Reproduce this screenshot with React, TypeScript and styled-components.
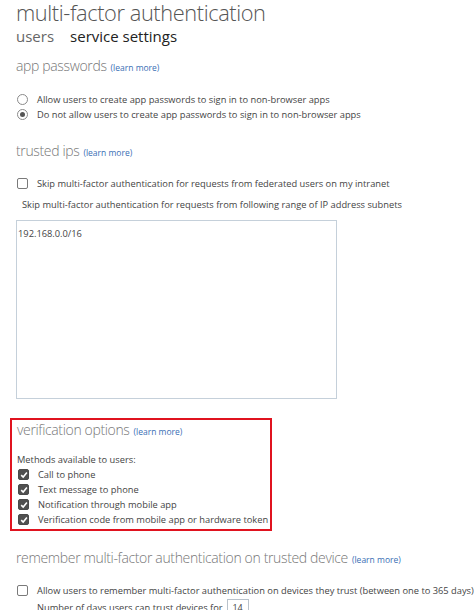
import styled, { createGlobalStyle } from "styled-components";

const GlobalStyle = createGlobalStyle`
  html, body {
    margin: 0;
    padding: 0;
    background: #ffffff;
  }
  body {
    font-family: "Open Sans", "Noto Sans", "Liberation Sans", sans-serif;
    color: #444;
    overflow: hidden;
  }
`;

const Page = styled.div`
  width: 474px;
  height: 610px;
  overflow: hidden;
  padding: 0 0 0 16px;
  box-sizing: border-box;
`;

const Title = styled.h1`
  margin: 0;
  font-size: 21.8px;
  font-weight: 300;
  line-height: 25px;
  color: #555;
  letter-spacing: -0.4px;
`;

const Tabs = styled.nav`
  display: flex;
  gap: 16px;
  margin-top: 0;
  height: 22px;
  align-items: center;
`;

const Tab = styled.span<{ $active?: boolean }>`
  font-size: 15px;
  font-weight: 400;
  color: ${(p) => (p.$active ? "#222" : "#666")};
`;

const Section = styled.section<{ $top: number }>`
  margin-top: ${(p) => p.$top}px;
`;

const Heading = styled.h2`
  margin: 0;
  font-size: 14px;
  font-weight: 300;
  color: #777;
  line-height: 20px;
  letter-spacing: -0.35px;
  display: flex;
  align-items: baseline;
  gap: 4px;
`;

const LearnMore = styled.a`
  font-size: 8.5px;
  color: #3a6fb5;
  font-weight: 400;
  letter-spacing: 0;
  text-decoration: none;
`;

const OptionList = styled.div<{ $top: number; $gap: number }>`
  display: flex;
  flex-direction: column;
  gap: ${(p) => p.$gap}px;
  margin-top: ${(p) => p.$top}px;
`;

const Option = styled.label`
  display: flex;
  align-items: center;
  gap: 9px;
  height: 13px;
  padding-left: 1px;
  font-size: 9.3px;
  color: #444;
  white-space: nowrap;
`;

const Radio = styled.span<{ $checked?: boolean }>`
  width: 9px;
  height: 9px;
  border-radius: 50%;
  border: 1px solid #8a8a8a;
  background: #fff;
  display: flex;
  align-items: center;
  justify-content: center;
  flex: none;
  &::after {
    content: "";
    width: 5px;
    height: 5px;
    border-radius: 50%;
    background: ${(p) => (p.$checked ? "#555" : "transparent")};
  }
`;

const Box = styled.span<{ $checked?: boolean }>`
  width: 9px;
  height: 9px;
  border-radius: 2px;
  border: 1px solid ${(p) => (p.$checked ? "#4a4a4a" : "#7a7a7a")};
  background: ${(p) => (p.$checked ? "#505050" : "#fff")};
  display: flex;
  align-items: center;
  justify-content: center;
  flex: none;
  svg {
    display: block;
  }
`;

const Note = styled.div<{ $top: number; $left: number }>`
  font-size: 9.3px;
  color: #444;
  margin-top: ${(p) => p.$top}px;
  padding-left: ${(p) => p.$left}px;
  white-space: nowrap;
  line-height: 13px;
`;

const IpArea = styled.div`
  margin-top: 9px;
  width: 321px;
  height: 179px;
  box-sizing: border-box;
  border: 1px solid #c5d0da;
  padding: 6px 1px;
  font-size: 9.3px;
  color: #444;
`;

const Highlight = styled.div`
  margin-top: 19px;
  margin-left: -6px;
  width: 262px;
  height: 113px;
  box-sizing: border-box;
  border: 2px solid #e0131f;
  padding: 0 0 0 5px;
`;

const DaysRow = styled.div`
  display: flex;
  align-items: center;
  gap: 4px;
  padding-left: 21px;
  font-size: 9.3px;
  color: #444;
  white-space: nowrap;
  margin-top: 2px;
`;

const DaysInput = styled.span`
  display: inline-flex;
  align-items: center;
  justify-content: center;
  width: 22px;
  height: 16px;
  box-sizing: border-box;
  border: 1px solid #b9c2cb;
  border-bottom: none;
  font-size: 9px;
`;

function Check() {
  return (
    <svg width="8" height="8" viewBox="0 0 8 8">
      <path d="M1.2 4.2 L3.2 6.1 L6.9 1.6" fill="none" stroke="#fff" strokeWidth="1.6" />
    </svg>
  );
}

const methods = [
  "Call to phone",
  "Text message to phone",
  "Notification through mobile app",
  "Verification code from mobile app or hardware token",
];

function App() {
  return (
    <Page>
      <GlobalStyle />
      <Title>multi-factor authentication</Title>
      <Tabs>
        <Tab>users</Tab>
        <Tab $active>service settings</Tab>
      </Tabs>

      <Section $top={9}>
        <Heading>
          app passwords <LearnMore>(learn more)</LearnMore>
        </Heading>
        <OptionList $top={15} $gap={2}>
          <Option>
            <Radio />
            Allow users to create app passwords to sign in to non-browser apps
          </Option>
          <Option>
            <Radio $checked />
            Do not allow users to create app passwords to sign in to non-browser apps
          </Option>
        </OptionList>
      </Section>

      <Section $top={20}>
        <Heading>
          trusted ips <LearnMore>(learn more)</LearnMore>
        </Heading>
        <OptionList $top={14} $gap={2}>
          <Option>
            <Box />
            Skip multi-factor authentication for requests from federated users on my intranet
          </Option>
        </OptionList>
        <Note $top={8} $left={6}>
          Skip multi-factor authentication for requests from following range of IP address subnets
        </Note>
        <IpArea>192.168.0.0/16</IpArea>
      </Section>

      <Highlight>
        <Heading>
          verification options <LearnMore>(learn more)</LearnMore>
        </Heading>
        <Note $top={11} $left={0}>
          Methods available to users:
        </Note>
        <OptionList $top={2} $gap={2}>
          {methods.map((m) => (
            <Option key={m}>
              <Box $checked>
                <Check />
              </Box>
              {m}
            </Option>
          ))}
        </OptionList>
      </Highlight>

      <Section $top={17}>
        <Heading>
          remember multi-factor authentication on trusted device <LearnMore>(learn more)</LearnMore>
        </Heading>
        <OptionList $top={14} $gap={2}>
          <Option>
            <Box />
            Allow users to remember multi-factor authentication on devices they trust (between one to 365 days)
          </Option>
        </OptionList>
        <DaysRow>
          Number of days users can trust devices for <DaysInput>14</DaysInput>
        </DaysRow>
      </Section>
    </Page>
  );
}

export default App;
